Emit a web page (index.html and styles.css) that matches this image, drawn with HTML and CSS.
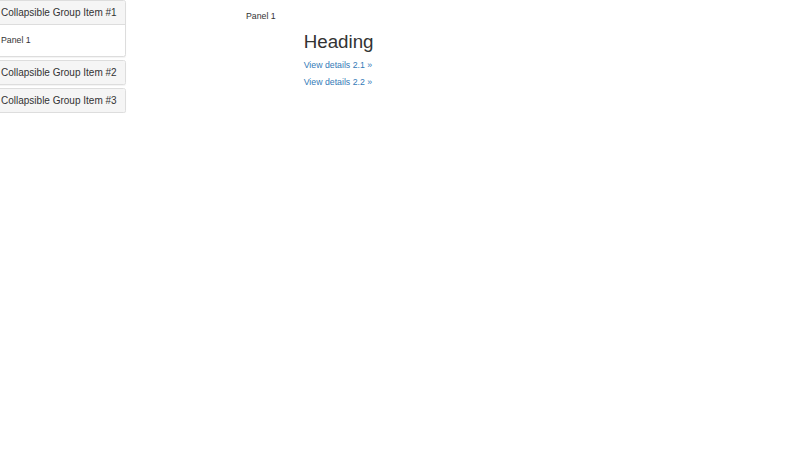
FILE: index.html
```html
<!DOCTYPE html>
<html>
<head>
<meta charset="utf-8">
<link rel="stylesheet" href="styles.css">
</head>
<body>
<div class="page">
  <div class="panel-group">
    <div class="panel">
      <div class="panel-heading"><h4 class="panel-title">Collapsible Group Item #1</h4></div>
      <div class="panel-body">Panel 1</div>
    </div>
    <div class="panel">
      <div class="panel-heading"><h4 class="panel-title">Collapsible Group Item #2</h4></div>
    </div>
    <div class="panel">
      <div class="panel-heading"><h4 class="panel-title">Collapsible Group Item #3</h4></div>
    </div>
  </div>
  <div class="tab-pane">Panel 1</div>
  <div class="content">
    <h2 class="heading">Heading</h2>
    <p class="item"><a href="#">View details 2.1 &raquo;</a></p>
    <p class="item"><a href="#">View details 2.2 &raquo;</a></p>
  </div>
</div>
</body>
</html>
```

FILE: styles.css
```css
html, body {
  margin: 0;
  padding: 0;
  background: #fff;
}
body {
  font-family: "Liberation Sans", Arial, Helvetica, sans-serif;
  font-size: 8.75px;
  line-height: 12.5px;
  color: #333;
}
.page {
  display: flex;
  align-items: flex-start;
}
.panel-group {
  width: 136px;
  margin-left: -10px;
  flex: none;
}
.panel {
  background: #fff;
  border: 1px solid #ddd;
  border-radius: 2.5px;
  box-shadow: 0 1px 1px rgba(0,0,0,.05);
}
.panel + .panel {
  margin-top: 3px;
}
.panel-heading {
  background: #f5f5f5;
  padding: 6px 9px 6px 10px;
  border-bottom: 1px solid #ddd;
  border-radius: 2px 2px 0 0;
}
.panel:not(:first-child) .panel-heading {
  border-bottom: 0;
  border-radius: 2px;
}
.panel-title {
  margin: 0;
  font-size: 10px;
  font-weight: 400;
  line-height: 11px;
  color: #333;
  white-space: nowrap;
}
.panel-body {
  padding: 9.4px 10px;
}
.tab-pane {
  margin-left: 120px;
  padding-top: 9.5px;
  flex: none;
}
.content {
  margin-left: 28px;
  padding-top: 32px;
}
.heading {
  margin: 0 0 6px 0;
  font-size: 18.75px;
  font-weight: 500;
  line-height: 20.6px;
  color: #333;
}
.item {
  margin: 0 0 4.5px 0;
}
.item a {
  color: #337ab7;
  text-decoration: none;
}
```
